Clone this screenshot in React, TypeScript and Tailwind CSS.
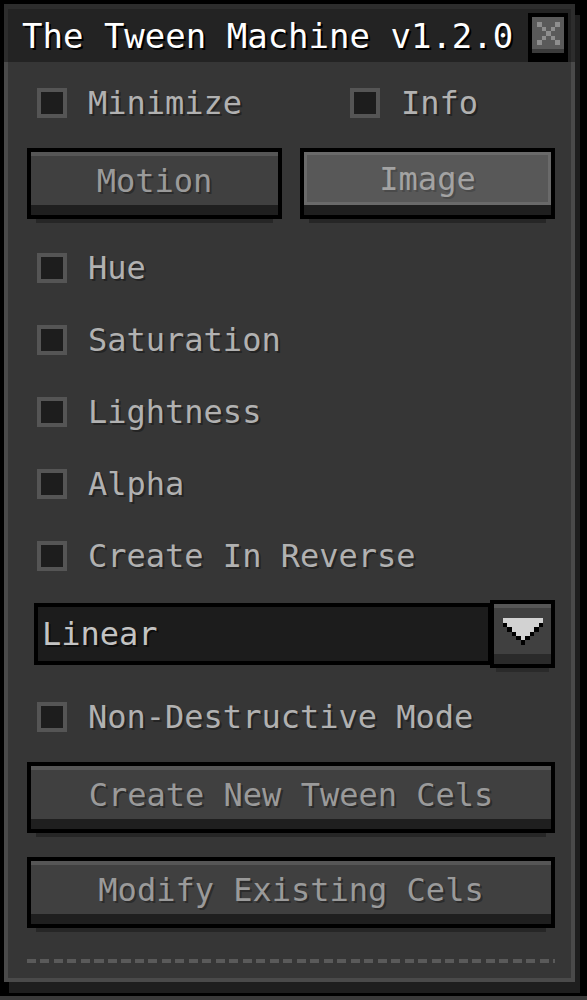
import React from "react";

const font = "font-['DejaVu_Sans_Mono','Liberation_Mono',monospace]";

function Check({ label, className = "" }: { label: string; className?: string }) {
  return (
    <div className={`flex items-center h-[30px] ${className}`}>
      <div className="w-[30px] h-[30px] border-[4px] border-[#555555] bg-[#1d1d1d] shrink-0" />
      <span className="ml-[21px] text-[32px] leading-[30px] text-[#b1b1b1] [text-shadow:2px_2px_0_#242424] whitespace-nowrap">
        {label}
      </span>
    </div>
  );
}

function Btn({ label, active = false, className = "" }: { label: string; active?: boolean; className?: string }) {
  return (
    <div className={`flex flex-col ${className}`}>
      <div className="h-[71px] border-[4px] border-black bg-black flex flex-col">
        {active ? (
          <div className="h-[53px] bg-[#585858] border-[3px] border-[#6a6a6a] flex items-center justify-center">
            <span className="text-[32px] leading-none text-[#a3a3a3] [text-shadow:2px_2px_0_#4a4a4a]">{label}</span>
          </div>
        ) : (
          <>
            <div className="h-[4px] bg-[#565656]" />
            <div className="h-[49px] bg-[#404040] flex items-center justify-center">
              <span className="text-[32px] leading-none text-[#9a9a9a] [text-shadow:2px_2px_0_#2c2c2c] whitespace-nowrap">
                {label}
              </span>
            </div>
          </>
        )}
        <div className="flex-1 bg-[#1f1f1f]" />
      </div>
      <div className="h-[4px] mx-[9px] bg-[#262626]" />
    </div>
  );
}

function CloseX() {
  const cells = [
    [0, 0], [4, 0], [1, 1], [3, 1], [2, 2], [1, 3], [3, 3], [0, 4], [4, 4],
  ];
  return (
    <svg width="23" height="23" viewBox="0 0 5 5" shapeRendering="crispEdges">
      {cells.map(([x, y]) => (
        <rect key={`${x}-${y}`} x={x} y={y} width="1" height="1" fill="#8e8e8e" />
      ))}
    </svg>
  );
}

function Arrow() {
  // pixel triangle, light body with black outline steps
  const light = [
    [0, 0, 9],
    [1, 1, 7],
    [2, 2, 5],
    [3, 3, 3],
    [4, 4, 1],
  ];
  const dark = [
    [0, 1], [8, 1], [1, 2], [7, 2], [2, 3], [6, 3], [3, 4], [5, 4], [4, 5],
  ];
  return (
    <svg width="40" height="27" viewBox="0 0 9 6" shapeRendering="crispEdges">
      {light.map(([x, y, w]) => (
        <rect key={`l${y}`} x={x} y={y} width={w} height="1" fill="#d2d2d2" />
      ))}
      {dark.map(([x, y]) => (
        <rect key={`d${x}-${y}`} x={x} y={y} width="1" height="1" fill="#000" />
      ))}
    </svg>
  );
}

export default function App() {
  return (
    <div className={`w-[587px] h-[1000px] bg-black overflow-hidden border-b-[4px] border-[#3a3a3a] ${font}`}>
      <div className="ml-[4px] mt-[4px] w-[571px] h-[978px] flex flex-col shadow-[5px_11px_0_#1e1e1e]">
        {/* top strip */}
        <div className="h-[5px] bg-[#2d2d2d]" />

        {/* title bar */}
        <div className="h-[53px] bg-[#232323] border-x-[4px] border-[#2d2d2d] flex items-start justify-between">
          <span className="pl-[14px] pt-[9px] text-[34px] leading-[36px] text-white [text-shadow:2px_2px_0_#000] whitespace-nowrap">
            The Tween Machine v1.2.0
          </span>
          <div className="mt-[4px] mr-[3px] w-[40px] h-[49px] bg-black p-[4px] flex flex-col">
            <div className="h-[32px] bg-[#5a5a5a] flex items-center justify-center">
              <CloseX />
            </div>
            <div className="h-[4px] bg-[#3b3b3b]" />
          </div>
        </div>

        {/* body */}
        <div className="flex-1 bg-[#363636] border-x-[4px] border-b-[4px] border-[#4a4a4a] pl-[19px] pr-[16px] flex flex-col">
          <div className="mt-[26px] ml-[10px] flex">
            <Check label="Minimize" className="w-[313px]" />
            <Check label="Info" />
          </div>

          <div className="mt-[30px] grid grid-cols-2 gap-[18px]">
            <Btn label="Motion" />
            <Btn label="Image" active />
          </div>

          <div className="mt-[30px] ml-[10px] flex flex-col gap-[42px]">
            <Check label="Hue" />
            <Check label="Saturation" />
            <Check label="Lightness" />
            <Check label="Alpha" />
            <Check label="Create In Reverse" />
          </div>

          {/* dropdown */}
          <div className="mt-[29px] flex items-start">
            <div className="mt-[3px] ml-[7px] flex-1 h-[62px] border-[4px] border-black bg-[#1c1c1c] flex items-center pl-[4px]">
              <span className="text-[32px] leading-none text-[#c3c3c3] [text-shadow:2px_2px_0_#0e0e0e]">Linear</span>
            </div>
            <div className="ml-[-2px] flex flex-col">
              <div className="w-[65px] h-[68px] border-[4px] border-black bg-black flex flex-col">
                <div className="h-[4px] bg-[#565656]" />
                <div className="flex-1 bg-[#404040] flex items-center justify-center">
                  <Arrow />
                </div>
                <div className="h-[10px] bg-[#2a2a2a]" />
              </div>
              <div className="h-[4px] mx-[6px] bg-[#2a2a2a]" />
            </div>
          </div>

          <Check label="Non-Destructive Mode" className="mt-[30px] ml-[10px]" />

          <Btn label="Create New Tween Cels" className="mt-[30px]" />
          <Btn label="Modify Existing Cels" className="mt-[20px]" />

          <div className="mt-[27px] h-[4px] bg-[repeating-linear-gradient(90deg,#5a5a5a_0px,#5a5a5a_9px,transparent_9px,transparent_13.5px)]" />
        </div>
      </div>
    </div>
  );
}
